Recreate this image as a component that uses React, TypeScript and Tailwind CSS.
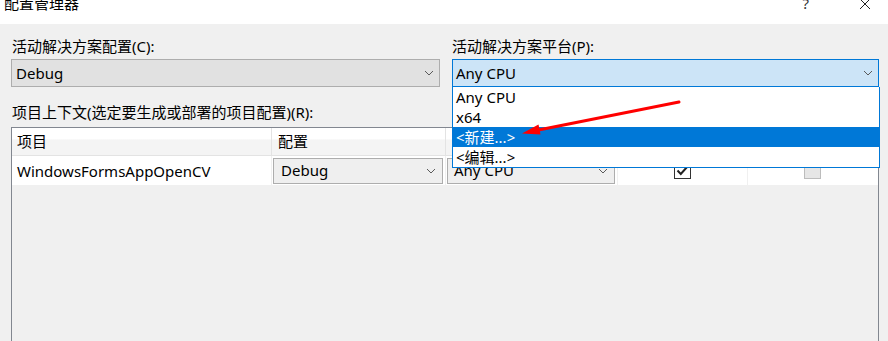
import React from "react";

const Chevron = ({ className = "" }: { className?: string }) => (
  <svg width="10" height="6" viewBox="0 0 10 6" className={className}>
    <path d="M1 1 L5 5 L9 1" fill="none" stroke="#5a5a5a" strokeWidth="1" />
  </svg>
);

export default function App() {
  return (
    <div className="relative w-[888px] h-[341px] overflow-hidden bg-[#f0f0f0] font-['Noto_Sans','Noto_Sans_CJK_SC',sans-serif] text-[15px] text-black">
      {/* title bar */}
      <div className="h-[24px] bg-white flex items-start overflow-hidden">
        <span className="ml-[4px] mt-[-7px] leading-[20px]">配置管理器</span>
        <span className="ml-auto mr-[50px] mt-[-7px] leading-[20px] text-[#333]">?</span>
        <svg width="12" height="12" viewBox="0 0 12 12" className="mr-[17px] mt-[-2px]">
          <path d="M1 1 L11 11 M11 1 L1 11" stroke="#222" strokeWidth="1" />
        </svg>
      </div>

      {/* body */}
      <div className="pl-[11px] pr-[9px] pt-[12px]">
        <div className="flex gap-[12px]">
          <div className="w-[429px] flex flex-col">
            <div className="leading-[20px] pl-[1px]">活动解决方案配置(C):</div>
            <div className="mt-[3px] h-[28px] border border-[#adadad] bg-[#e1e1e1] flex items-center pl-[4px] pr-[5px]">
              <span>Debug</span>
              <Chevron className="ml-auto" />
            </div>
          </div>
          <div className="w-[427px] flex flex-col">
            <div className="leading-[20px]">活动解决方案平台(P):</div>
            <div className="mt-[3px] h-[28px] border border-[#0078d7] bg-[#cce4f7] flex items-center pl-[3px] pr-[5px]">
              <span>Any CPU</span>
              <Chevron className="ml-auto" />
            </div>
          </div>
        </div>

        <div className="mt-[15px] leading-[20px] pl-[1px]">项目上下文(选定要生成或部署的项目配置)(R):</div>

        {/* grid */}
        <div className="mt-[5px] w-[868px] h-[230px] border border-[#828790] bg-[#f0f0f0]">
          <div className="flex h-[28px] bg-[linear-gradient(to_bottom,#ffffff_0%,#ffffff_42%,#f4f4f4_43%,#f4f4f4_100%)] border-b border-[#e3e3e3]">
            <div className="w-[260px] border-r border-[#e3e3e3] flex items-center pl-[5px]">项目</div>
            <div className="w-[174px] border-r border-[#e3e3e3] flex items-center pl-[6px]">配置</div>
            <div className="w-[172px] border-r border-[#e3e3e3]" />
            <div className="w-[130px] border-r border-[#e3e3e3]" />
            <div className="flex-1" />
          </div>
          <div className="flex h-[30px] bg-white border-b border-[#f0f0f0]">
            <div className="w-[260px] border-r border-[#f0f0f0] flex items-center pl-[5px] pt-[2px]">WindowsFormsAppOpenCV</div>
            <div className="w-[174px] border-r border-[#f0f0f0] flex items-center pl-[1px] pr-[2px]">
              <div className="h-[26px] w-full border border-[#adadad] bg-[#efefef] flex items-center pl-[7px] pr-[6px]">
                <span>Debug</span>
                <Chevron className="ml-auto" />
              </div>
            </div>
            <div className="w-[172px] border-r border-[#f0f0f0] flex items-center pl-[1px] pr-[2px]">
              <div className="h-[26px] w-full border border-[#adadad] bg-[#efefef] flex items-center pl-[6px] pr-[6px]">
                <span>Any CPU</span>
                <Chevron className="ml-auto" />
              </div>
            </div>
            <div className="w-[130px] border-r border-[#f0f0f0] flex items-center justify-center">
              <div className="w-[17px] h-[17px] border border-[#333] bg-white flex items-center justify-center">
                <svg width="13" height="11" viewBox="0 0 13 11">
                  <path d="M1.5 5.5 L4.8 9 L11.5 1.5" fill="none" stroke="#222" strokeWidth="2" />
                </svg>
              </div>
            </div>
            <div className="flex-1 flex items-center justify-center pr-[1px]">
              <div className="w-[17px] h-[17px] border border-[#bcbcbc] bg-[#e6e6e6]" />
            </div>
          </div>
        </div>
      </div>

      {/* dropdown list */}
      <div className="absolute left-[452px] top-[87px] w-[428px] h-[81px] bg-white border border-t-0 border-[#0078d7] flex flex-col">
        <div className="h-[20px] leading-[20px] pl-[3px]">Any CPU</div>
        <div className="h-[20px] leading-[20px] pl-[3px]">x64</div>
        <div className="h-[20px] leading-[20px] pl-[3px] bg-[#0078d7] text-white">&lt;新建...&gt;</div>
        <div className="h-[20px] leading-[20px] pl-[3px]">&lt;编辑...&gt;</div>
      </div>

      {/* red arrow */}
      <svg className="absolute left-0 top-0 pointer-events-none" width="888" height="341">
        <line x1="679" y1="102" x2="536" y2="130.5" stroke="#ff0000" strokeWidth="3" strokeLinecap="round" />
        <polygon points="522,133.5 540.5,134.5 538.5,124.5" fill="#ff0000" />
      </svg>
    </div>
  );
}
